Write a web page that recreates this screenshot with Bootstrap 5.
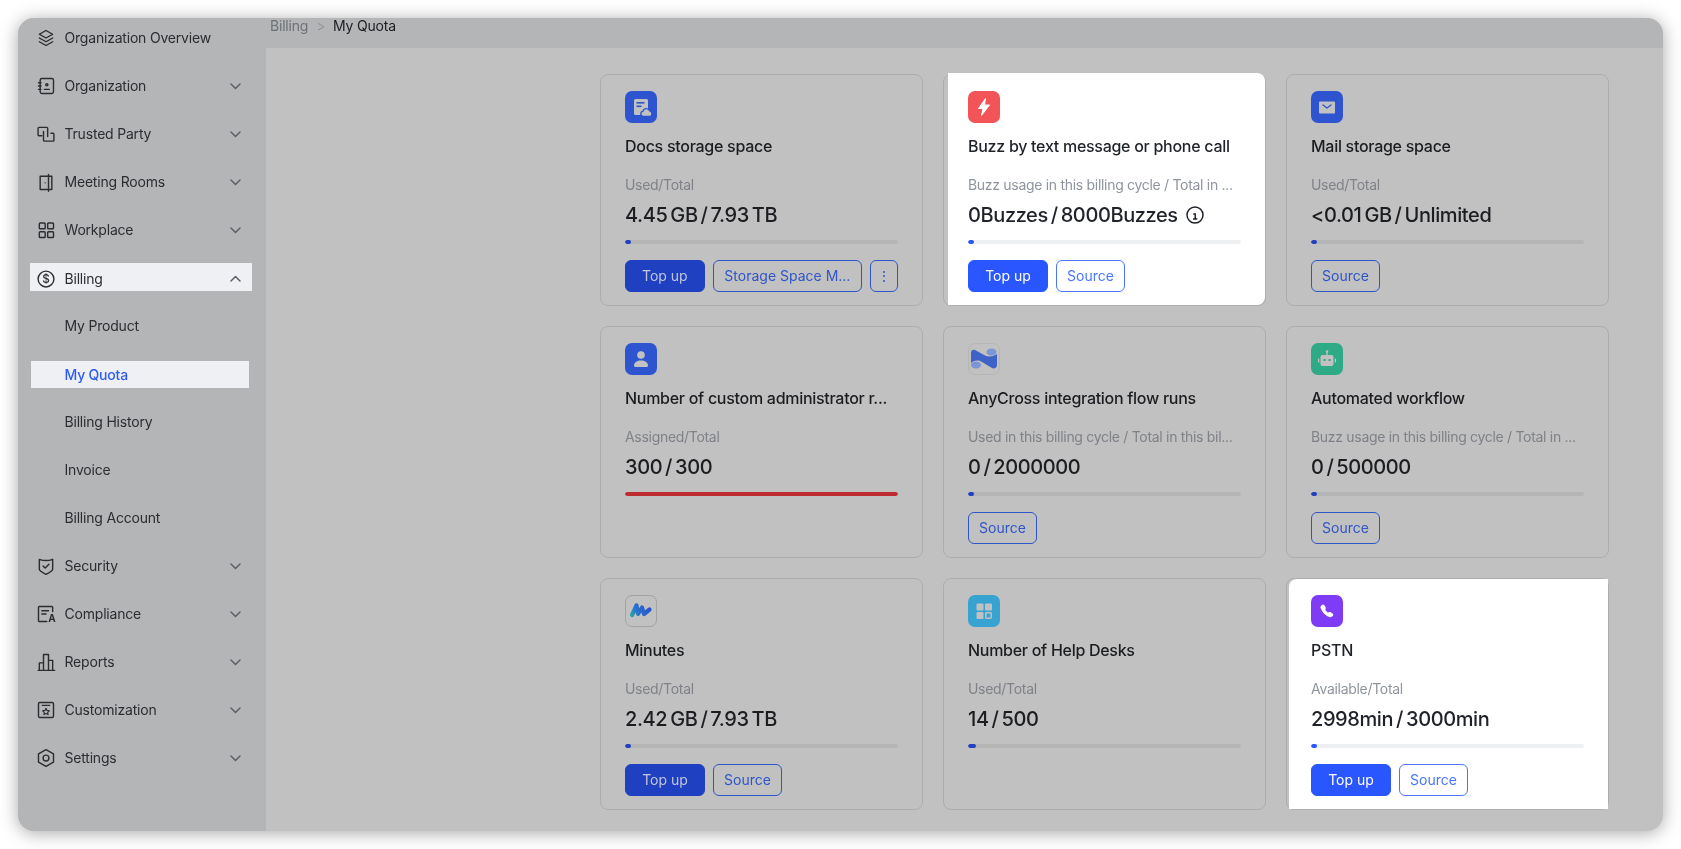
<!DOCTYPE html>
<html lang="en">
  <head>
    <meta charset="UTF-8" />
    <meta name="viewport" content="width=device-width, initial-scale=1.0" />
    <title>My Quota</title>
    <link href="https://cdn.jsdelivr.net/npm/bootstrap@5.3.0/dist/css/bootstrap.min.css" rel="stylesheet" />
    <style>
      html, body { height: 100%; }
      body { background: #fff; font-family: Inter, "Liberation Sans", sans-serif; font-size: 14px; letter-spacing: -.2px; overflow: hidden; }
      .app-window { position: fixed; inset: 18px; border-radius: 16px; overflow: hidden; box-shadow: 0 2px 18px rgba(0,0,0,.35); background: #c1c1c1; }
      .side-panel { width: 248px; flex: none; background: #b4b5b7; padding-top: 5px; gap: 20px; color: #2b2d31; }
      .side-row { height: 28px; margin: 0 14px 0 12px; padding: 2px 11px 0 6px; gap: 8.5px; color: #2b2d31; text-decoration: none; line-height: 20px; }
      .side-row svg.glyph { width: 20px; height: 20px; flex: none; fill: none; stroke: #2b2d31; stroke-width: 1.7; stroke-linejoin: round; stroke-linecap: round; }
      .side-row svg.caret { width: 11px; height: 7px; margin-left: auto; fill: none; stroke: #5d6066; stroke-width: 1.5; stroke-linecap: round; stroke-linejoin: round; }
      .side-row.sub-row { padding-left: 34.5px; }
      .side-row.is-open { background: #eff0f4; padding-top: 3px; color: #2b2d31; }
      .side-row.is-current { background: #eff0f4; color: #2f5cf5; height: 27px; margin: 2px 17px -1px 13px; padding: 0 0 0 33.5px; font-weight: 500; }
      .top-strip { height: 30px; background: #b4b5b7; padding-left: 4px; line-height: 16px; flex: none; }
      .top-strip .breadcrumb { --bs-breadcrumb-divider: ">"; --bs-breadcrumb-item-padding-x: 8px; --bs-breadcrumb-divider-color: #7c7f84; font-size: 14px; margin: 0; }
      .top-strip .breadcrumb-item { color: #6e7176; }
      .top-strip .breadcrumb-item.active { color: #1c1e21; }
      .top-strip .breadcrumb-item + .breadcrumb-item::before { font-weight: 200; }
      .quota-grid { grid-template-columns: repeat(3, 323px); grid-auto-rows: 232px; gap: 20px; margin: 26px 0 0 334px; }
      .quota-card { --accent: #1f41c1; --outline: #2f55c9; --track: #b5b5b6; --ink: #1b1d20; --muted: #7f8288; --ico: #c1c1c1; position: relative; border: 1px solid #adadad; border-radius: 8px; padding: 16px 24px 0; background: transparent; min-width: 0; }
      .quota-card > * { position: relative; z-index: 1; }
      .quota-card.lit { --accent: #2a56ff; --outline: #4a76ff; --track: #eff0f1; --ink: #1f2329; --muted: #8f959e; --ico: #fff; }
      .quota-card.lit::before { content: ""; position: absolute; z-index: 0; top: -2px; bottom: 0; left: 4px; right: 0; background: #fff; border-radius: 0 8px 8px 0; }
      .quota-card.lit.last-lit::before { top: 0; left: 2px; border-radius: 8px 0 0 0; }
      .tile { width: 32px; height: 32px; display: block; border-radius: 7px; }
      .card-name { font-size: 16px; font-weight: 500; line-height: 24px; margin: 11px 0 0; color: var(--ink); letter-spacing: -.28px; }
      .card-hint { line-height: 22px; margin-top: 16px; color: var(--muted); letter-spacing: -.3px; white-space: nowrap; }
      .card-value { font-size: 20px; font-weight: 500; line-height: 28px; margin-top: 5px; color: var(--ink); letter-spacing: -.4px; word-spacing: -2px; white-space: nowrap; }
      .card-value svg { width: 20px; height: 20px; margin-left: 4px; vertical-align: -3px; }
      .quota-card .progress { --bs-progress-height: 4px; --bs-progress-bg: var(--track); --bs-progress-bar-bg: var(--accent); --bs-progress-border-radius: 2px; margin-top: 11px; }
      .quota-card .progress-bar { border-radius: 2px; }
      .quota-card .progress-bar.over { background: #bd2a30; }
      .card-actions { margin-top: 16px; gap: 8px; }
      .quota-btn { --bs-btn-padding-y: 0; --bs-btn-padding-x: 10px; --bs-btn-font-size: 14px; --bs-btn-line-height: 30px; --bs-btn-border-radius: 6px; --bs-btn-color: var(--outline); --bs-btn-border-color: var(--outline); --bs-btn-bg: transparent; white-space: nowrap; }
      .quota-btn.solid { width: 80px; --bs-btn-padding-x: 0; --bs-btn-color: #c0c6dc; --bs-btn-bg: var(--accent); --bs-btn-border-color: var(--accent); }
      .lit .quota-btn.solid { --bs-btn-color: #fff; }
      .quota-btn.source { width: 69px; --bs-btn-padding-x: 0; }
      .quota-btn.wide { width: 150px; }
      .quota-btn.dots { width: 28px; --bs-btn-padding-x: 0; }
    </style>
  </head>
  <body>
    <div class="app-window d-flex">
      <nav class="side-panel d-flex flex-column">
        <a class="side-row d-flex align-items-center" href="#">
          <svg class="glyph" viewBox="0 0 24 24"><path d="M12 3l8 4.5-8 4.5-8-4.5zM4 12l8 4.5 8-4.5M4 16.5l8 4.5 8-4.5"/></svg>Organization Overview
        </a>
        <a class="side-row d-flex align-items-center" href="#">
          <svg class="glyph" viewBox="0 0 24 24"><rect x="5" y="3" width="16" height="18" rx="2"/><path d="M3 8h3M3 12h3M3 16h3M10 16h6"/><circle cx="13" cy="10.5" r="1.3"/></svg>Organization
          <svg class="caret" viewBox="0 0 11 7"><path d="M1 1l4.5 4.5L10 1"/></svg>
        </a>
        <a class="side-row d-flex align-items-center" href="#">
          <svg class="glyph" viewBox="0 0 24 24"><path d="M7 14H3.500a1 1 0 0 1-1-1V5a1 1 0 0 1 1-1H13a1 1 0 0 1 1 1v10"/><path d="M9 9v10.500a1 1 0 0 0 1 1h10.500a1 1 0 0 0 1-1V12a1 1 0 0 0-1-1H18"/></svg>Trusted Party
          <svg class="caret" viewBox="0 0 11 7"><path d="M1 1l4.5 4.5L10 1"/></svg>
        </a>
        <a class="side-row d-flex align-items-center" href="#">
          <svg class="glyph" viewBox="0 0 24 24"><path d="M15 5H5v16h14V5h-4zM15 3v20"/><path d="M11 13h.1"/></svg>Meeting Rooms
          <svg class="caret" viewBox="0 0 11 7"><path d="M1 1l4.5 4.5L10 1"/></svg>
        </a>
        <a class="side-row d-flex align-items-center" href="#">
          <svg class="glyph" viewBox="0 0 24 24"><rect x="4" y="3.500" width="7" height="7" rx="1"/><rect x="14" y="3.500" width="7" height="7" rx="1"/><rect x="4" y="14" width="7" height="7" rx="1"/><rect x="14" y="14" width="7" height="7" rx="1"/></svg>Workplace
          <svg class="caret" viewBox="0 0 11 7"><path d="M1 1l4.5 4.5L10 1"/></svg>
        </a>
        <a class="side-row is-open d-flex align-items-center" href="#">
          <svg class="glyph" viewBox="0 0 24 24"><circle cx="12" cy="12" r="9.500"/><text x="12" y="17" text-anchor="middle" font-size="14" font-weight="500" fill="#2b2d31" stroke="none">$</text></svg>Billing
          <svg class="caret" viewBox="0 0 11 7"><path d="M1 6l4.500-4.500L10 6"/></svg>
        </a>
        <a class="side-row sub-row d-flex align-items-center" href="#">My Product</a>
        <a class="side-row is-current d-flex align-items-center" href="#">My Quota</a>
        <a class="side-row sub-row d-flex align-items-center" href="#">Billing History</a>
        <a class="side-row sub-row d-flex align-items-center" href="#">Invoice</a>
        <a class="side-row sub-row d-flex align-items-center" href="#">Billing Account</a>
        <a class="side-row d-flex align-items-center" href="#">
          <svg class="glyph" viewBox="0 0 24 24"><path d="M4 4q8 3 16 0v12q0 2-8 6-8-4-8-6z"/><path d="M8.500 12l2.500 2.500 4.500-4.500"/></svg>Security
          <svg class="caret" viewBox="0 0 11 7"><path d="M1 1l4.5 4.5L10 1"/></svg>
        </a>
        <a class="side-row d-flex align-items-center" href="#">
          <svg class="glyph" viewBox="0 0 24 24"><path d="M20 9V4a1 1 0 0 0-1-1H4a1 1 0 0 0-1 1v16a1 1 0 0 0 1 1h9M7 8h8M7 12h5"/><text x="19" y="22" text-anchor="middle" font-size="12" font-weight="700" fill="#2b2d31" stroke="none">A</text></svg>Compliance
          <svg class="caret" viewBox="0 0 11 7"><path d="M1 1l4.5 4.5L10 1"/></svg>
        </a>
        <a class="side-row d-flex align-items-center" href="#">
          <svg class="glyph" viewBox="0 0 24 24"><path d="M2.500 22h20M4 22v-9h5v9M9 22V3h6v19M15 22V10h5v12"/></svg>Reports
          <svg class="caret" viewBox="0 0 11 7"><path d="M1 1l4.5 4.5L10 1"/></svg>
        </a>
        <a class="side-row d-flex align-items-center" href="#">
          <svg class="glyph" viewBox="0 0 24 24"><rect x="3" y="3" width="18" height="18" rx="1.500"/><path d="M7.500 6.500h9M12 10l1.200 2.500 2.800.4-2 1.900.5 2.700L12 16.200l-2.500 1.300.5-2.700-2-1.900 2.800-.4z" stroke-width="1.400"/></svg>Customization
          <svg class="caret" viewBox="0 0 11 7"><path d="M1 1l4.5 4.5L10 1"/></svg>
        </a>
        <a class="side-row d-flex align-items-center" href="#">
          <svg class="glyph" viewBox="0 0 24 24"><path d="M12 2l9 5v10l-9 5-9-5V7z"/><circle cx="12" cy="12" r="3.500"/></svg>Settings
          <svg class="caret" viewBox="0 0 11 7"><path d="M1 1l4.5 4.5L10 1"/></svg>
        </a>
      </nav>

      <main class="flex-grow-1 d-flex flex-column">
        <div class="top-strip">
          <ol class="breadcrumb">
            <li class="breadcrumb-item">Billing</li>
            <li class="breadcrumb-item active">My Quota</li>
          </ol>
        </div>
        <div class="quota-grid d-grid">
          <section class="quota-card">
            <svg class="tile" viewBox="0 0 32 32" style="background:#2f54d0">
              <rect x="9" y="8" width="14" height="16" rx="1.500" fill="var(--ico)"/>
              <rect x="11.500" y="11" width="8" height="1.600" fill="#2f54d0"/><rect x="11.500" y="14.500" width="5" height="1.600" fill="#2f54d0"/>
              <path d="M18 25.500a2.700 2.700 0 0 1 0-5.300 3.500 3.500 0 0 1 6.600-.4 3 3 0 0 1 .4 5.700z" fill="var(--ico)" stroke="#2f54d0" stroke-width="1.300"/>
            </svg>
            <h6 class="card-name text-truncate">Docs storage space</h6>
            <div class="card-hint">Used/Total</div>
            <div class="card-value">4.45 GB / 7.93 TB</div>
            <div class="progress"><div class="progress-bar" style="width:2.2%"></div></div>
            <div class="card-actions d-flex">
              <button class="btn quota-btn solid">Top up</button>
              <button class="btn quota-btn wide">Storage Space M...</button>
              <button class="btn quota-btn dots">&#8942;</button>
            </div>
          </section>

          <section class="quota-card lit">
            <svg class="tile" viewBox="0 0 32 32" style="background:#f25458">
              <path d="M17.500 7.500L10.500 17.500h4.500L13.500 24.500 21.500 14h-5z" fill="var(--ico)" stroke="var(--ico)" stroke-width="1" stroke-linejoin="round"/>
            </svg>
            <h6 class="card-name text-truncate">Buzz by text message or phone call</h6>
            <div class="card-hint">Buzz usage in this billing cycle / Total in ...</div>
            <div class="card-value">0Buzzes / 8000Buzzes
              <svg viewBox="0 0 20 20" fill="none" stroke="#1f2329" stroke-width="1.500"><circle cx="10" cy="10" r="8"/><path d="M8.300 9h1.900v5M8 14h4.300M10 6h.1"/></svg>
            </div>
            <div class="progress"><div class="progress-bar" style="width:2.2%"></div></div>
            <div class="card-actions d-flex">
              <button class="btn quota-btn solid">Top up</button>
              <button class="btn quota-btn source">Source</button>
            </div>
          </section>

          <section class="quota-card">
            <svg class="tile" viewBox="0 0 32 32" style="background:#2f54d0">
              <rect x="8" y="10.500" width="16" height="12" rx="1" fill="var(--ico)"/>
              <path d="M12 14l4 3 4-3" fill="none" stroke="#2f54d0" stroke-width="1.300" stroke-linecap="round"/>
            </svg>
            <h6 class="card-name text-truncate">Mail storage space</h6>
            <div class="card-hint">Used/Total</div>
            <div class="card-value">&lt;0.01 GB / Unlimited</div>
            <div class="progress"><div class="progress-bar" style="width:2.2%"></div></div>
            <div class="card-actions d-flex">
              <button class="btn quota-btn source">Source</button>
            </div>
          </section>

          <section class="quota-card">
            <svg class="tile" viewBox="0 0 32 32" style="background:#2f54d0">
              <circle cx="16" cy="12" r="3.800" fill="var(--ico)"/>
              <path d="M9 22.500c0-3 3-5 7-5s7 2 7 5c0 .8-.6 1.500-1.500 1.500h-11c-.9 0-1.500-.7-1.500-1.500z" fill="var(--ico)"/>
            </svg>
            <h6 class="card-name text-truncate">Number of custom administrator r...</h6>
            <div class="card-hint">Assigned/Total</div>
            <div class="card-value">300 / 300</div>
            <div class="progress"><div class="progress-bar over" style="width:100%"></div></div>
          </section>

          <section class="quota-card">
            <svg class="tile" viewBox="0 0 32 32" style="outline:1px solid #b6b6b6;outline-offset:-1px">
              <ellipse cx="23.500" cy="9" rx="5" ry="3.500" fill="#7d94d6"/><ellipse cx="8" cy="22" rx="5" ry="3.500" fill="#7d94d6"/>
              <path d="M3 10C3 7 5 6 7 7L17 12.500C20 14 24 14 29 11V22C29 25 26 26 24 25L14 19C10 17 7 17 3 20Z" fill="#3f62c8"/>
            </svg>
            <h6 class="card-name text-truncate">AnyCross integration flow runs</h6>
            <div class="card-hint">Used in this billing cycle / Total in this bil...</div>
            <div class="card-value">0 / 2000000</div>
            <div class="progress"><div class="progress-bar" style="width:2.2%"></div></div>
            <div class="card-actions d-flex">
              <button class="btn quota-btn source">Source</button>
            </div>
          </section>

          <section class="quota-card">
            <svg class="tile" viewBox="0 0 32 32" style="background:#2faa87">
              <path d="M16 12V9" stroke="var(--ico)" stroke-width="1.300"/><circle cx="16" cy="8.500" r="1.200" fill="var(--ico)"/>
              <rect x="9.500" y="12" width="13" height="11" rx="2" fill="var(--ico)"/>
              <rect x="7" y="15.500" width="1.300" height="4" rx=".6" fill="var(--ico)"/><rect x="23.700" y="15.500" width="1.300" height="4" rx=".6" fill="var(--ico)"/>
              <rect x="12.500" y="16" width="2" height="2" fill="#2faa87"/><rect x="17.500" y="16" width="2" height="2" fill="#2faa87"/>
            </svg>
            <h6 class="card-name text-truncate">Automated workflow</h6>
            <div class="card-hint">Buzz usage in this billing cycle / Total in ...</div>
            <div class="card-value">0 / 500000</div>
            <div class="progress"><div class="progress-bar" style="width:2.2%"></div></div>
            <div class="card-actions d-flex">
              <button class="btn quota-btn source">Source</button>
            </div>
          </section>

          <section class="quota-card">
            <svg class="tile" viewBox="0 0 32 32" style="outline:1px solid #a3a3a3;outline-offset:-1px">
              <defs><linearGradient id="minutesWave" gradientUnits="userSpaceOnUse" x1="5" y1="22" x2="26" y2="10"><stop offset="0" stop-color="#2fae9a"/><stop offset=".4" stop-color="#2a6fd0"/><stop offset="1" stop-color="#2550c8"/></linearGradient></defs>
              <path d="M7 20L11.500 10.500 13 19 17 12.500 19 19 24.500 14.500" fill="none" stroke="url(#minutesWave)" stroke-width="4.200" stroke-linecap="round" stroke-linejoin="round"/>
            </svg>
            <h6 class="card-name text-truncate">Minutes</h6>
            <div class="card-hint">Used/Total</div>
            <div class="card-value">2.42 GB / 7.93 TB</div>
            <div class="progress"><div class="progress-bar" style="width:2.2%"></div></div>
            <div class="card-actions d-flex">
              <button class="btn quota-btn solid">Top up</button>
              <button class="btn quota-btn source">Source</button>
            </div>
          </section>

          <section class="quota-card">
            <svg class="tile" viewBox="0 0 32 32" style="background:#36a3d0">
              <rect x="8.500" y="8.500" width="7" height="7" rx="1" fill="var(--ico)"/><rect x="17" y="8.500" width="7" height="7" rx="1" fill="var(--ico)"/>
              <rect x="8.500" y="17" width="7" height="7" rx="1" fill="var(--ico)"/>
              <rect x="17.800" y="17.800" width="5.400" height="5.400" rx=".6" fill="none" stroke="var(--ico)" stroke-width="1.500"/>
            </svg>
            <h6 class="card-name text-truncate">Number of Help Desks</h6>
            <div class="card-hint">Used/Total</div>
            <div class="card-value">14 / 500</div>
            <div class="progress"><div class="progress-bar" style="width:2.8%"></div></div>
          </section>

          <section class="quota-card lit last-lit">
            <svg class="tile" viewBox="0 0 32 32" style="background:#7f3bf5">
              <g transform="translate(9.500 9.500) scale(.8)"><path fill="var(--ico)" d="M1.885.511a1.745 1.745 0 0 1 2.61.163L6.29 2.98c.329.423.445.974.315 1.494l-.547 2.19a.678.678 0 0 0 .178.643l2.457 2.457a.678.678 0 0 0 .644.178l2.189-.547a1.745 1.745 0 0 1 1.494.315l2.306 1.794c.829.645.905 1.87.163 2.611l-1.034 1.034c-.74.74-1.846 1.065-2.877.702a18.634 18.634 0 0 1-7.01-4.42 18.634 18.634 0 0 1-4.42-7.009c-.362-1.03-.037-2.137.703-2.877L1.885.511z"/></g>
            </svg>
            <h6 class="card-name text-truncate">PSTN</h6>
            <div class="card-hint">Available/Total</div>
            <div class="card-value">2998min / 3000min</div>
            <div class="progress"><div class="progress-bar" style="width:2.2%"></div></div>
            <div class="card-actions d-flex">
              <button class="btn quota-btn solid">Top up</button>
              <button class="btn quota-btn source">Source</button>
            </div>
          </section>
        </div>
      </main>
    </div>
    <script src="https://cdn.jsdelivr.net/npm/bootstrap@5.3.0/dist/js/bootstrap.bundle.min.js"></script>
  </body>
</html>
